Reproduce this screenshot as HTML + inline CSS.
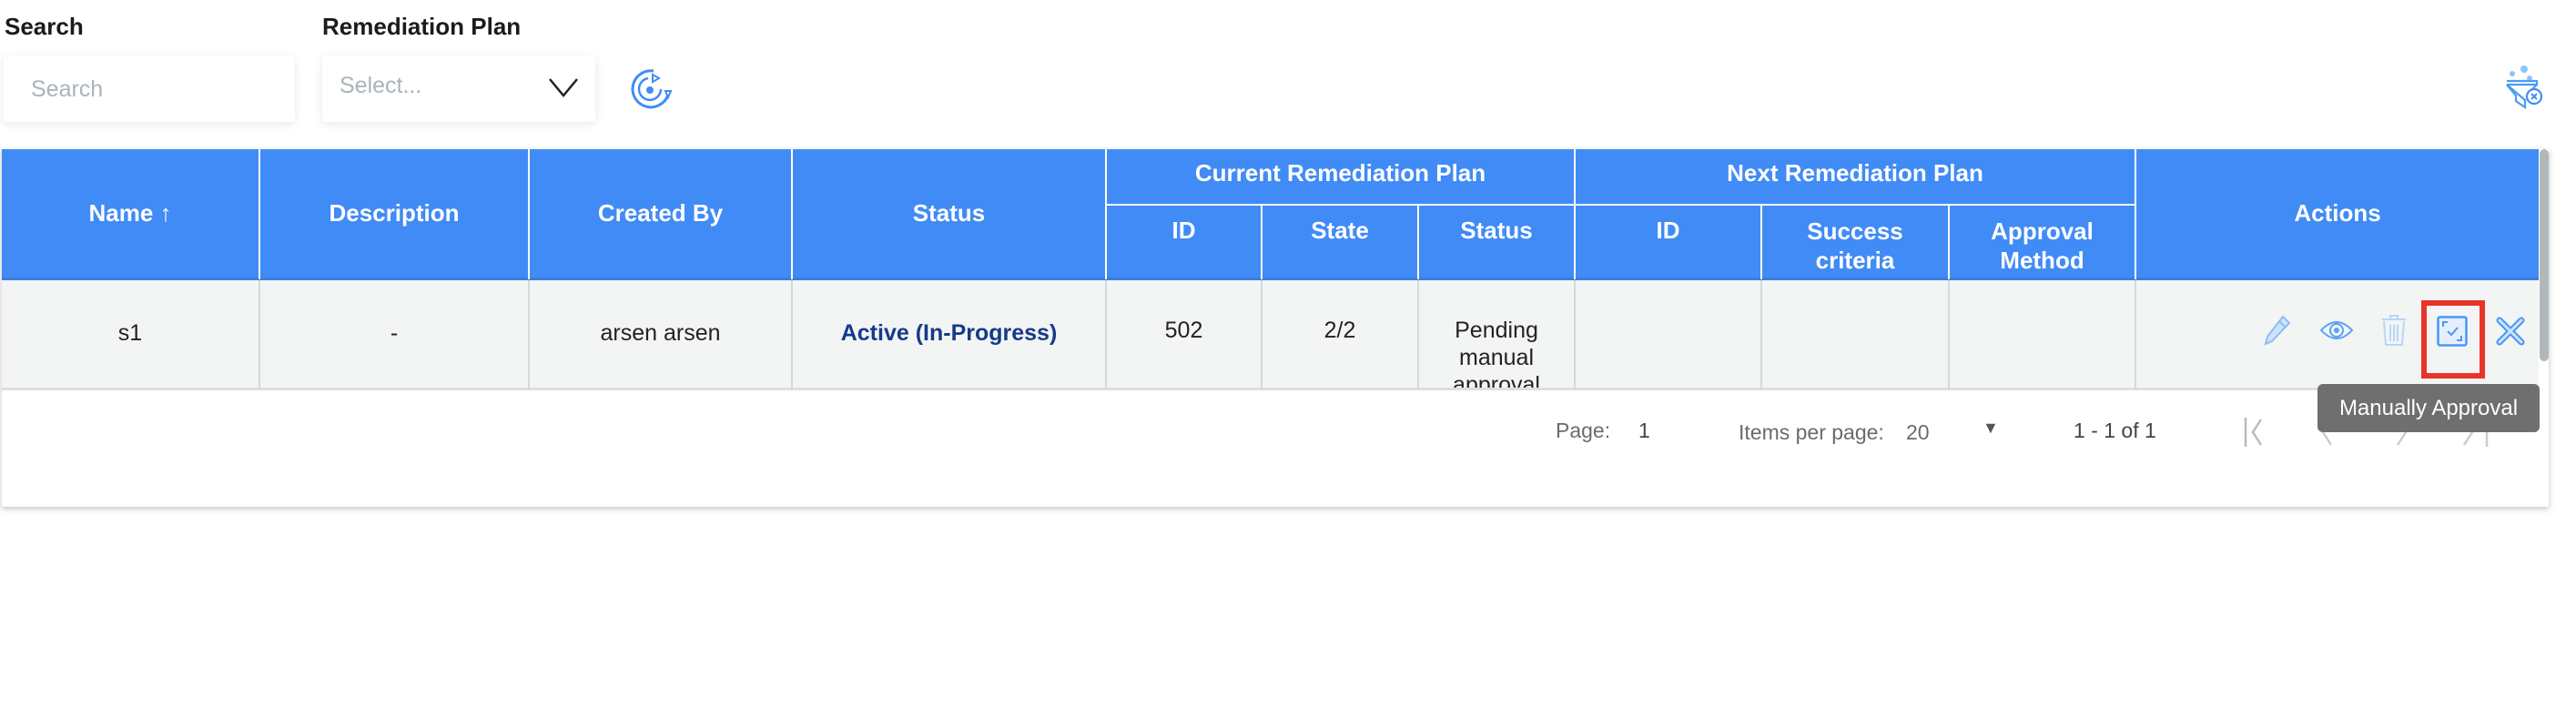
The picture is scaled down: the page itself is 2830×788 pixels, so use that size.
<!DOCTYPE html>
<html><head><meta charset="utf-8"><style>
*{margin:0;padding:0;box-sizing:border-box}
body{width:2830px;height:788px;background:#fff;position:relative;overflow:hidden;font-family:"Liberation Sans",Arial,sans-serif}
.a{position:absolute}
.lbl{font-size:26px;font-weight:bold;color:#1b1b1b}
.inp{background:#fff;box-shadow:0 2px 10px rgba(0,0,0,.10);border-radius:3px}
.ph{font-size:25px;color:#a9b4b9}
.h{color:#fff;font-weight:bold;font-size:26px;text-align:center;line-height:30px}
.c{font-size:25px;color:#222;text-align:center;line-height:30px}
.vl{position:absolute;width:2px;background:#fff}
.bl{position:absolute;width:2px;background:#d6d9d9}
.pg{font-size:23px;color:#6b6b6b}
</style></head><body>
<div class="a lbl" style="left:5px;top:14px">Search</div>
<div class="a lbl" style="left:354px;top:14px">Remediation Plan</div>
<div class="a inp" style="left:4px;top:62px;width:320px;height:72px"></div>
<div class="a ph" style="left:34px;top:84px">Search</div>
<div class="a inp" style="left:354px;top:62px;width:300px;height:72px"></div>
<div class="a ph" style="left:373px;top:80px">Select...</div>
<svg class="a" style="left:602px;top:84px" width="34" height="24"><path d="M2 3 L17 21 L32 3" fill="none" stroke="#222" stroke-width="2.5"/></svg>
<svg class="a" style="left:688px;top:72px" width="54" height="54" viewBox="0 0 54 54"><path d="M30 6 A20 20 0 1 0 46 32" fill="none" stroke="#3f8df5" stroke-width="3"/><path d="M24 14 A12 12 0 1 0 38 26" fill="none" stroke="#3f8df5" stroke-width="2.5"/><circle cx="26" cy="27" r="4" fill="#3f8df5"/><path d="M29 10 L36 14 L29 18Z" fill="none" stroke="#3f8df5" stroke-width="2"/><path d="M43 28 L49 28 L46 35Z" fill="none" stroke="#3f8df5" stroke-width="2"/></svg>
<svg class="a" style="left:2752px;top:70px" width="46" height="52" viewBox="0 0 46 52"><circle cx="8" cy="11" r="3" fill="#8cc4fb"/><circle cx="21" cy="6" r="4" fill="#8cc4fb"/><circle cx="27" cy="16" r="3" fill="#8cc4fb"/><path d="M2 19 H35 V23 L24 34 M22 40 V48 L12 41 V35 L2 23 Z M2 23 H35" fill="none" stroke="#4a9bf6" stroke-width="2.2"/><circle cx="32" cy="36" r="8" fill="#fff" stroke="#3f8df5" stroke-width="2.2"/><path d="M29 33 L35 39 M35 33 L29 39" stroke="#3f8df5" stroke-width="2"/></svg>

<div class="a" style="left:2px;top:164px;width:2798px;height:393px;background:#fff;box-shadow:0 2px 6px rgba(0,0,0,.25)"></div>
<div class="a" style="left:2px;top:164px;width:2787px;height:143px;background:#418bf6"></div>
<div class="a" style="left:2px;top:305px;width:2787px;height:3px;background:#3a7ee0"></div>
<div class="a" style="left:2px;top:308px;width:2787px;height:120px;background:#f2f5f4"></div>
<div class="a" style="left:2px;top:426px;width:2787px;height:3px;background:#dcdfdf"></div>
<div class="a" style="left:2790px;top:164px;width:10px;height:233px;background:#b0b8bb;border-radius:5px"></div>

<div class="vl" style="left:284px;top:164px;height:143px"></div>
<div class="vl" style="left:580px;top:164px;height:143px"></div>
<div class="vl" style="left:869px;top:164px;height:143px"></div>
<div class="vl" style="left:1214px;top:164px;height:143px"></div>
<div class="vl" style="left:1729px;top:164px;height:143px"></div>
<div class="vl" style="left:2345px;top:164px;height:143px"></div>
<div class="a" style="left:1214px;top:224px;width:1131px;height:2px;background:#fff"></div>
<div class="vl" style="left:1385px;top:224px;height:83px"></div>
<div class="vl" style="left:1557px;top:224px;height:83px"></div>
<div class="vl" style="left:1934px;top:224px;height:83px"></div>
<div class="vl" style="left:2140px;top:224px;height:83px"></div>

<div class="bl" style="left:284px;top:308px;height:120px"></div>
<div class="bl" style="left:580px;top:308px;height:120px"></div>
<div class="bl" style="left:869px;top:308px;height:120px"></div>
<div class="bl" style="left:1214px;top:308px;height:120px"></div>
<div class="bl" style="left:1385px;top:308px;height:120px"></div>
<div class="bl" style="left:1557px;top:308px;height:120px"></div>
<div class="bl" style="left:1729px;top:308px;height:120px"></div>
<div class="bl" style="left:1934px;top:308px;height:120px"></div>
<div class="bl" style="left:2140px;top:308px;height:120px"></div>
<div class="bl" style="left:2345px;top:308px;height:120px"></div>

<div class="a h" style="left:2px;width:282px;top:219px">Name &#8593;</div>
<div class="a h" style="left:286px;width:294px;top:219px">Description</div>
<div class="a h" style="left:582px;width:287px;top:219px">Created By</div>
<div class="a h" style="left:871px;width:343px;top:219px">Status</div>
<div class="a h" style="left:1216px;width:513px;top:175px">Current Remediation Plan</div>
<div class="a h" style="left:1731px;width:614px;top:175px">Next Remediation Plan</div>
<div class="a h" style="left:2347px;width:442px;top:219px">Actions</div>
<div class="a h" style="left:1216px;width:169px;top:238px">ID</div>
<div class="a h" style="left:1387px;width:170px;top:238px">State</div>
<div class="a h" style="left:1559px;width:170px;top:238px">Status</div>
<div class="a h" style="left:1731px;width:203px;top:238px">ID</div>
<div class="a h" style="left:1936px;width:204px;top:238px;line-height:32px">Success<br>criteria</div>
<div class="a h" style="left:2142px;width:203px;top:238px;line-height:32px">Approval<br>Method</div>

<div class="a c" style="left:2px;width:282px;top:351px">s1</div>
<div class="a c" style="left:286px;width:294px;top:351px">-</div>
<div class="a c" style="left:582px;width:287px;top:351px">arsen arsen</div>
<div class="a c" style="left:871px;width:343px;top:351px;color:#163a8a;font-weight:bold">Active (In-Progress)</div>
<div class="a c" style="left:1216px;width:169px;top:348px">502</div>
<div class="a c" style="left:1387px;width:170px;top:348px">2/2</div>
<div class="a" style="left:1559px;width:170px;top:308px;height:118px;overflow:hidden"><div class="c" style="margin-top:40px">Pending<br>manual<br>approval</div></div>

<svg class="a" style="left:2486px;top:345px" width="32" height="36" viewBox="0 0 32 36"><path d="M22 3 L29 10 L10 30 L3 33 L5 25 Z" fill="#cfe3fb" stroke="#8dbdf6" stroke-width="2"/><path d="M18 8 L25 15" stroke="#8dbdf6" stroke-width="2"/></svg>
<svg class="a" style="left:2548px;top:347px" width="38" height="32" viewBox="0 0 38 32"><path d="M2 16 Q19 -2 36 16 Q19 34 2 16Z" fill="none" stroke="#5aa2f6" stroke-width="2"/><circle cx="19" cy="16" r="7" fill="none" stroke="#5aa2f6" stroke-width="2"/><circle cx="19" cy="16" r="3" fill="#5aa2f6"/></svg>
<svg class="a" style="left:2615px;top:344px" width="30" height="38" viewBox="0 0 30 38"><path d="M2 7 H28 M11 7 V3 H19 V7 M4 9 L6 35 H24 L26 9" fill="none" stroke="#b6d6fa" stroke-width="2"/><path d="M11 13 V31 M15 13 V31 M19 13 V31" stroke="#b6d6fa" stroke-width="2"/></svg>
<div class="a" style="left:2660px;top:330px;width:70px;height:86px;border:6px solid #e8342a"></div>
<svg class="a" style="left:2677px;top:347px" width="34" height="34" viewBox="0 0 34 34"><rect x="1.5" y="1.5" width="31" height="31" rx="2" fill="#e4effd" stroke="#4a97f5" stroke-width="2.5"/><path d="M7 12 V7 H12 M27 22 V27 H22" fill="none" stroke="#4a97f5" stroke-width="2"/><path d="M12 17 L16 21 L23 13" fill="none" stroke="#4a97f5" stroke-width="2"/></svg>
<svg class="a" style="left:2742px;top:348px" width="32" height="32" viewBox="0 0 32 32"><path d="M4 4 L28 28 M28 4 L4 28" stroke="#4a97f5" stroke-width="7" stroke-linecap="round"/><path d="M4 4 L28 28 M28 4 L4 28" stroke="#cfe4fd" stroke-width="3" stroke-linecap="round"/></svg>

<div class="a pg" style="left:1709px;top:460px">Page:</div>
<div class="a pg" style="left:1800px;top:460px;color:#444">1</div>
<div class="a pg" style="left:1910px;top:462px">Items per page:</div>
<div class="a pg" style="left:2094px;top:462px">20</div>
<div class="a pg" style="left:2178px;top:460px;font-size:18px;color:#555">&#9660;</div>
<div class="a pg" style="left:2278px;top:460px;color:#444">1 - 1 of 1</div>
<svg class="a" style="left:2464px;top:457px" width="280" height="36" viewBox="0 0 280 36"><path d="M3 2 V34 M20 4 L11 18 L20 32" fill="none" stroke="#bbb" stroke-width="2.5"/><path d="M97 4 L88 18 L97 32" fill="none" stroke="#ccc" stroke-width="2.5"/><path d="M170 4 L179 18 L170 32" fill="none" stroke="#ccc" stroke-width="2.5"/><path d="M243 4 L252 18 L243 32 M268 2 V34" fill="none" stroke="#ccc" stroke-width="2.5"/></svg>
<div class="a" style="left:2546px;top:422px;width:244px;height:53px;background:#6f6f6f;border-radius:6px;color:#fff;font-size:24px;line-height:53px;text-align:center">Manually Approval</div>
</body></html>
